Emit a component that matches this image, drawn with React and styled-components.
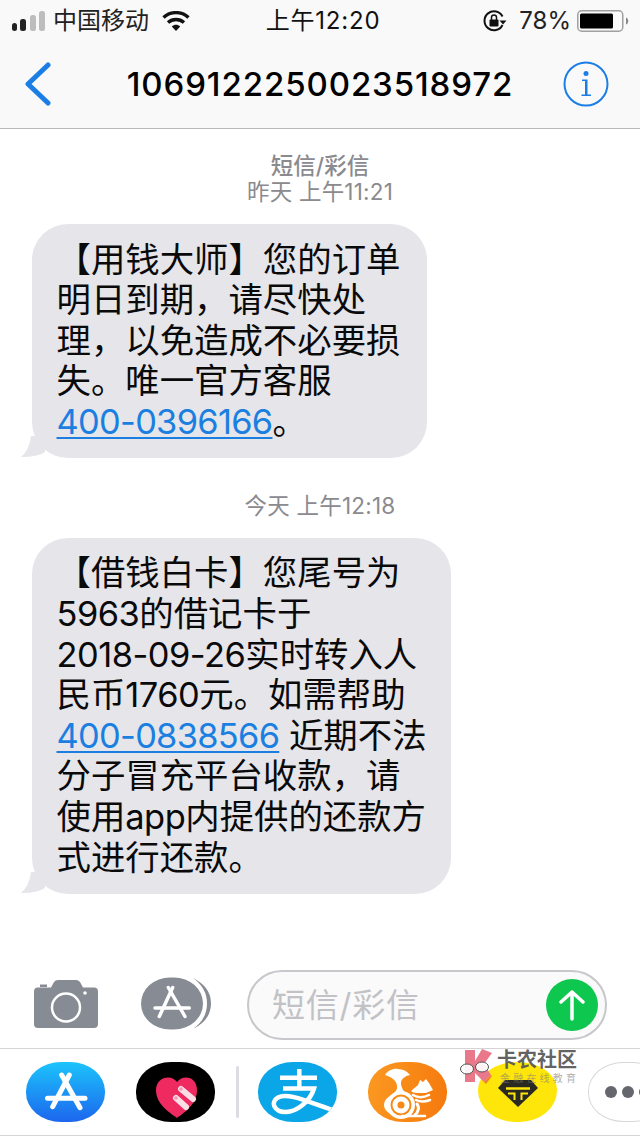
import React from "react";
import styled, { createGlobalStyle } from "styled-components";

const GlobalStyle = createGlobalStyle`
  html, body {
    margin: 0;
    padding: 0;
    background: #fff;
  }
  * {
    box-sizing: border-box;
  }
`;

const cjk = `Inter, "Noto Sans CJK SC", sans-serif`;

const Screen = styled.div`
  position: relative;
  width: 640px;
  height: 1136px;
  display: flex;
  flex-direction: column;
  overflow: hidden;
  background: #fff;
  font-family: ${cjk};
  color: #000;
`;

const Header = styled.header`
  height: 129px;
  flex: none;
  background: #f9f9f9;
  border-bottom: 1px solid #b9b9bb;
`;

const StatusBar = styled.div`
  height: 40px;
  padding: 1px 11px 0 12px;
  display: grid;
  grid-template-columns: 1fr auto 1fr;
  align-items: center;
  font-size: 24px;
  line-height: 40px;
`;

const StatusLeft = styled.div`
  display: flex;
  align-items: center;
`;

const Carrier = styled.span`
  margin-left: 8px;
  margin-right: 13px;
  color: #222;
`;

const StatusRight = styled.div`
  display: flex;
  align-items: center;
  justify-content: flex-end;
`;

const Percent = styled.span`
  margin: 0 6px 0 12px;
  color: #222;
`;

const Clock = styled.span`
  margin-left: 5px;
  letter-spacing: 0.800px;
  color: #111;
`;

const Nav = styled.div`
  height: 88px;
  padding: 0 24px;
  display: grid;
  grid-template-columns: 1fr auto 1fr;
  align-items: center;
`;

const Title = styled.h1`
  margin: 0;
  font-family: Inter, sans-serif;
  font-size: 33px;
  font-weight: 500;
  letter-spacing: 0.900px;
  line-height: 40px;
`;

const InfoSlot = styled.div`
  display: flex;
  justify-content: flex-end;
  margin-right: 7px;
`;

const Thread = styled.main`
  flex: 1;
  display: flex;
  flex-direction: column;
  padding: 24px 0 0 32px;
`;

const Stamp = styled.div`
  margin: ${(p) => p.$top || 0}px 0 19px -32px;
  text-align: center;
  color: #8a8a8f;
  font-size: 22.500px;
  line-height: 26px;
  letter-spacing: 0.200px;
`;

const StampKind = styled.div`
  font-weight: 500;
  letter-spacing: 0;
`;

const Bubble = styled.div`
  position: relative;
  align-self: flex-start;
  width: ${(p) => p.$width}px;
  padding: 15.500px 0 15.500px 24.500px;
  background: #e5e5ea;
  border-radius: 36px;
  font-size: 34.400px;
  line-height: 40.600px;
  color: #0a0a0a;
`;

const Line = styled.div`
  white-space: nowrap;
`;

const Latin = styled.span`
  letter-spacing: -0.500px;
`;

const Phone = styled.span`
  color: #1a7fe0;
  letter-spacing: -0.700px;
  text-decoration: underline;
  text-decoration-thickness: 2px;
  text-underline-offset: 3px;
`;

const Tail = styled.svg`
  position: absolute;
  left: -11px;
  bottom: 0;
`;

const Composer = styled.div`
  height: 88px;
  flex: none;
  padding: 2px 0 0 34px;
  display: flex;
  align-items: center;
`;

const CameraSlot = styled.div`
  display: flex;
  margin-bottom: 4px;
`;

const DrawerSlot = styled.div`
  display: flex;
  margin: 0 36px 2px 43px;
`;

const InputBox = styled.div`
  width: 360px;
  height: 70px;
  padding: 0 7px 0 23px;
  display: flex;
  align-items: center;
  justify-content: space-between;
  background: #fafafa;
  border: 2px solid #c7c7cc;
  border-radius: 35px;
  font-size: 33px;
  color: #c2c2c6;
`;

const Placeholder = styled.span`
  margin-bottom: 4px;
  letter-spacing: 0.800px;
`;

const SendButton = styled.div`
  width: 52px;
  height: 52px;
  border-radius: 50%;
  background: #0ec74f;
  display: flex;
  align-items: center;
  justify-content: center;
`;

const AppStrip = styled.div`
  height: 88px;
  flex: none;
  padding: 13px 0 0 26px;
  display: flex;
  align-items: flex-start;
  gap: 31px;
  background: #fff;
  border-top: 1px solid #d4d4d6;
  border-bottom: 1px solid #d4d4d6;
  overflow: hidden;
`;

const AppIcon = styled.div`
  width: 79px;
  height: 60px;
  flex: none;
  border-radius: ${(p) => p.$radius || "35px / 29px"};
  background: ${(p) => p.$bg};
  border: ${(p) => (p.$outline ? "1px solid #d8d8da" : "none")};
  display: flex;
  align-items: center;
  justify-content: ${(p) => (p.$outline ? "flex-start" : "center")};
  overflow: hidden;
`;

const Divider = styled.div`
  width: 3px;
  height: 52px;
  margin: 4px -12px 0 -10px;
  flex: none;
  border-radius: 2px;
  background: #dcdce2;
`;

const Dot = styled.span`
  width: 12px;
  height: 12px;
  margin-left: ${(p) => p.$left}px;
  flex: none;
  border-radius: 50%;
  background: #66666f;
`;

const Watermark = styled.div`
  position: absolute;
  left: 460px;
  top: 1049px;
  display: flex;
  align-items: flex-start;
`;

const MarkText = styled.div`
  margin-left: 4px;
  display: flex;
  flex-direction: column;
`;

const MarkTitle = styled.span`
  font-size: 20px;
  line-height: 23px;
  font-weight: 700;
  color: rgba(85, 85, 85, 0.92);
`;

const MarkSub = styled.span`
  margin-left: 3px;
  font-size: 10px;
  line-height: 12px;
  letter-spacing: 3.200px;
  white-space: nowrap;
  color: rgba(120, 120, 120, 0.6);
`;

const SignalIcon = () => (
  <svg width="33" height="20" viewBox="0 0 33 20">
    <rect x="0" y="12" width="5" height="8" rx="2.500" fill="#222" />
    <rect x="8" y="8" width="6" height="12" rx="2.500" fill="#222" />
    <rect x="18" y="4" width="6" height="16" rx="2.500" fill="#bdbdbd" />
    <rect x="27" y="0" width="6" height="20" rx="2.500" fill="#bdbdbd" />
  </svg>
);

const WifiIcon = () => (
  <svg width="28" height="20" viewBox="0 0 28 20">
    <path d="M1.500 6.500C8.500 0 19.500 0 26.500 6.500" fill="none" stroke="#111" strokeWidth="3.400" />
    <path d="M6 11.500C10.500 7.500 17.500 7.500 22 11.500" fill="none" stroke="#111" strokeWidth="3.400" />
    <path d="M9.800 15.400C12.300 13.300 15.700 13.300 18.200 15.400L14 20Z" fill="#111" />
  </svg>
);

const LockIcon = () => (
  <svg width="24" height="24" viewBox="0 0 24 24">
    <path d="M19.500 16A9.500 9.500 0 1 1 19.500 7.500" fill="none" stroke="#111" strokeWidth="2" />
    <path d="M16.500 11.500L23.500 11.500L20 15.500Z" fill="#111" />
    <rect x="6.500" y="10.500" width="9" height="7" rx="1" fill="#111" />
    <path d="M8.500 11V8.500A2.500 2.500 0 0 1 13.500 8.500V11" fill="none" stroke="#111" strokeWidth="1.500" />
  </svg>
);

const BatteryIcon = () => (
  <svg width="52" height="22" viewBox="0 0 52 22">
    <rect x="0.750" y="0.750" width="45" height="20.500" rx="4" fill="none" stroke="#a0a0a0" strokeWidth="1.500" />
    <rect x="3" y="3.500" width="33" height="15" rx="1.500" fill="#000" />
    <path d="M49 7.500C52 8.500 52 13.500 49 14.500Z" fill="#888" />
  </svg>
);

const BackIcon = () => (
  <svg width="28" height="44" viewBox="0 0 28 44">
    <path d="M24 3L4 22L24 41" fill="none" stroke="#1a7ee6" strokeWidth="5" strokeLinecap="round" strokeLinejoin="round" />
  </svg>
);

const InfoIcon = () => (
  <svg width="46" height="46" viewBox="0 0 46 46">
    <circle cx="23" cy="23" r="21.500" fill="none" stroke="#1a7ee6" strokeWidth="2" />
    <circle cx="23" cy="12.500" r="2.500" fill="#1a7ee6" />
    <path d="M19 18.500H24.500V33.500H28V35H18.500V33.500H22V20H19Z" fill="#1a7ee6" />
  </svg>
);

const CameraIcon = () => (
  <svg width="64" height="50" viewBox="0 0 64 50">
    <path
      d="M6 6.500H13V9H6Z M4 9.500H17L20 4Q21.500 2 24 2H42Q44.500 2 46 4L49 9.500H60Q64 9.500 64 13.500V46Q64 50 60 50H4Q0 50 0 46V13.500Q0 9.500 4 9.500Z"
      fill="#878c94"
    />
    <circle cx="32" cy="29.500" r="14" fill="none" stroke="#fff" strokeWidth="2.500" />
    <circle cx="51" cy="15" r="1.800" fill="#fff" />
  </svg>
);

const DrawerIcon = () => (
  <svg width="70" height="54" viewBox="0 0 70 54">
    <rect x="0" y="0.500" width="62" height="52" rx="29" ry="26" fill="#878c94" />
    <path d="M52 1Q70 10 70 26.500Q70 43 52 52Q66 42 66 26.500Q66 11 52 1Z" fill="#878c94" />
    <g fill="none" stroke="#fff" strokeWidth="3.500" strokeLinecap="round">
      <path d="M31.700 10.500L18.300 39.500" />
      <path d="M27.300 10.500L44 39.500" />
      <path d="M14 31H48.300" />
    </g>
  </svg>
);

const SendArrow = () => (
  <svg width="28" height="32" viewBox="0 0 28 32">
    <path d="M14 30V3M3 13L14 3L25 13" fill="none" stroke="#fff" strokeWidth="3.500" strokeLinecap="round" strokeLinejoin="round" />
  </svg>
);

const StoreGlyph = () => (
  <svg width="79" height="60" viewBox="0 0 79 60">
    <g fill="none" stroke="#fff" strokeWidth="5" strokeLinecap="round">
      <path d="M43.300 13L26.700 44.700" />
      <path d="M35.700 13L54 45.700" />
      <path d="M21.500 36.300H59" />
    </g>
  </svg>
);

const HeartGlyph = () => (
  <svg width="79" height="60" viewBox="0 0 79 60">
    <path d="M41 56C33 50 20 42 20 28C20 20 26 15.500 32 15.500C36 15.500 39 17.500 41 20C43 17.500 46 15.500 50 15.500C56 15.500 61 20 61 28C61 42 49 50 41 56Z" fill="#ef2a60" />
    <path d="M45 27L57 37M40 36L50 45" stroke="#fbdde5" strokeWidth="6" strokeLinecap="round" />
    <circle cx="45" cy="27" r="1.800" fill="#f29ab4" />
    <circle cx="40" cy="36" r="1.800" fill="#f29ab4" />
  </svg>
);

const AlipayGlyph = () => (
  <svg width="79" height="60" viewBox="0 0 79 60">
    <g fill="none" stroke="#fff" strokeWidth="4.500">
      <path d="M22 15.700H59" />
      <path d="M41.300 7V25" />
      <path d="M25 26.500H56C52 40 38 50 28 50C16 50 12 40 20 35.500C30 30 50 40 80 50" />
    </g>
  </svg>
);

const SquirrelGlyph = () => (
  <svg width="79" height="60" viewBox="0 0 79 60">
    <path
      d="M17 13C20 8 26 6 30 7C35 7 39 9 42 13C37 14 33 17 33 21C33 26 36 30 40 33L33 43L27 54C21 52 16 48 16 43C16 37 22 34 27 30C31 26 29 20 25 17C23 15 20 14 17 13Z"
      fill="#fff"
    />
    <circle cx="33" cy="43" r="14" fill="#fff" />
    <circle cx="33" cy="43" r="9.500" fill="none" stroke="#f78a14" strokeWidth="2" />
    <circle cx="33" cy="43" r="3.500" fill="#f78a14" />
    <path d="M43 29L50 23L52 18L55 20L58 17L61 21L65 28L58 31H50C46 31 44 30 43 29Z" fill="#fff" />
    <g fill="none" stroke="#fff" strokeLinecap="round">
      <path d="M45 33C50 36 55 36 61 33" strokeWidth="2.500" />
      <path d="M48 38C52 40 57 40 62 38" strokeWidth="2.500" />
      <path d="M49 42C52 46 50 50 47 53" strokeWidth="3" />
      <path d="M34 54H57" strokeWidth="2.500" />
    </g>
  </svg>
);

const DiamondGlyph = () => (
  <svg width="79" height="60" viewBox="0 0 79 60">
    <path d="M27 18H53L60 26L40 45L20 26Z" fill="#2a2a22" />
    <path d="M28 26.500H52" fill="none" stroke="#ffe60a" strokeWidth="2.500" />
    <path d="M30 31.500H36.500V38M50 31.500H43.500V38" fill="none" stroke="#ffe60a" strokeWidth="2" />
  </svg>
);

const MarkLogo = () => (
  <svg width="33" height="35" viewBox="0 0 33 35">
    <path d="M5 1H15V12L22 0L32 4L24 15L31 26L24 33L15 24V33H5Z" fill="#e9798a" />
    <path d="M24 33L31 26L32 27L26 35Z" fill="#f08030" />
    <ellipse cx="7" cy="20" rx="6.500" ry="5" fill="rgba(255,255,255,0.9)" stroke="#555" strokeWidth="1" />
    <ellipse cx="22" cy="18" rx="6.500" ry="5" fill="rgba(255,255,255,0.9)" stroke="#555" strokeWidth="1" />
  </svg>
);

const MessageTail = () => (
  <Tail width="24" height="22" viewBox="0 0 24 22">
    <path d="M24 0V16Q17 21 0 21Q8 15 10 0Z" fill="#e5e5ea" />
  </Tail>
);

export default function App() {
  return (
    <Screen>
      <GlobalStyle />
      <Header>
        <StatusBar>
          <StatusLeft>
            <SignalIcon />
            <Carrier>中国移动</Carrier>
            <WifiIcon />
          </StatusLeft>
          <Clock>上午12:20</Clock>
          <StatusRight>
            <LockIcon />
            <Percent>78%</Percent>
            <BatteryIcon />
          </StatusRight>
        </StatusBar>
        <Nav>
          <BackIcon />
          <Title>1069122250023518972</Title>
          <InfoSlot>
            <InfoIcon />
          </InfoSlot>
        </Nav>
      </Header>
      <Thread>
        <Stamp>
          <StampKind>短信/彩信</StampKind>
          昨天 上午11:21
        </Stamp>
        <Bubble $width={395}>
          <Line>【用钱大师】您的订单</Line>
          <Line>明日到期，请尽快处</Line>
          <Line>理，以免造成不必要损</Line>
          <Line>失。唯一官方客服</Line>
          <Line>
            <Phone>400-0396166</Phone>。
          </Line>
          <MessageTail />
        </Bubble>
        <Stamp $top={35}>今天 上午12:18</Stamp>
        <Bubble $width={419}>
          <Line>【借钱白卡】您尾号为</Line>
          <Line>
            <Latin>5963</Latin>的借记卡于
          </Line>
          <Line>
            <Latin>2018-09-26</Latin>实时转入人
          </Line>
          <Line>
            民币<Latin>1760</Latin>元。如需帮助
          </Line>
          <Line>
            <Phone>400-0838566</Phone> 近期不法
          </Line>
          <Line>分子冒充平台收款，请</Line>
          <Line>
            使用<Latin>app</Latin>内提供的还款方
          </Line>
          <Line>式进行还款。</Line>
          <MessageTail />
        </Bubble>
      </Thread>
      <Composer>
        <CameraSlot>
          <CameraIcon />
        </CameraSlot>
        <DrawerSlot>
          <DrawerIcon />
        </DrawerSlot>
        <InputBox>
          <Placeholder>短信/彩信</Placeholder>
          <SendButton>
            <SendArrow />
          </SendButton>
        </InputBox>
      </Composer>
      <AppStrip>
        <AppIcon $bg="linear-gradient(#1cc4fb, #1c66ee)">
          <StoreGlyph />
        </AppIcon>
        <AppIcon $bg="#000">
          <HeartGlyph />
        </AppIcon>
        <Divider />
        <AppIcon $bg="#0aa6e8">
          <AlipayGlyph />
        </AppIcon>
        <AppIcon $bg="linear-gradient(100deg, #fb9a22, #f5780c)">
          <SquirrelGlyph />
        </AppIcon>
        <AppIcon $bg="#ffe60a" $radius="40px 40px 38px 38px / 28px 28px 32px 32px">
          <DiamondGlyph />
        </AppIcon>
        <AppIcon $bg="#fff" $outline>
          <Dot $left={16} />
          <Dot $left={5} />
          <Dot $left={5} />
        </AppIcon>
      </AppStrip>
      <Watermark>
        <MarkLogo />
        <MarkText>
          <MarkTitle>卡农社区</MarkTitle>
          <MarkSub>金融在线教育</MarkSub>
        </MarkText>
      </Watermark>
    </Screen>
  );
}
